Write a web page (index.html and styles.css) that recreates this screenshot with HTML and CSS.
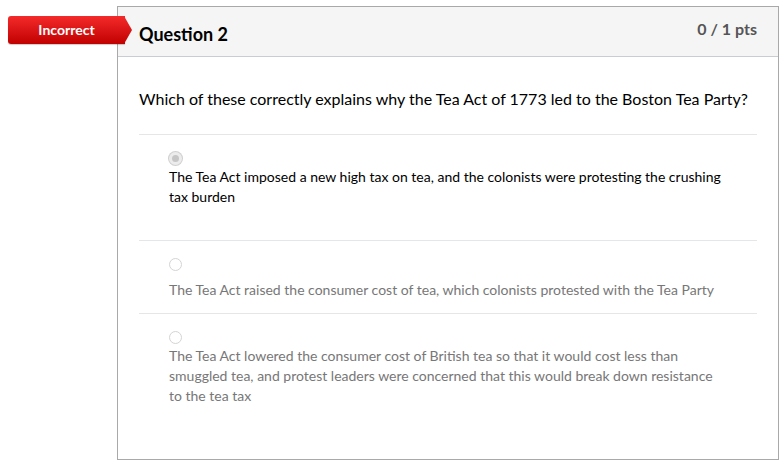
FILE: index.html
```html
<!DOCTYPE html>
<html lang="en">
<head>
    <meta charset="UTF-8">
    <title>Question 2</title>
    <link rel="stylesheet" href="styles.css">
</head>
<body>
    <div class="quiz">
        <div class="question">
            <div class="badge">Incorrect</div>
            <div class="header">
                <h2>Question 2</h2>
                <span class="points">0 / 1 pts</span>
            </div>
            <div class="content">
                <p class="question-text">Which of these correctly explains why the Tea Act of 1773 led to the Boston Tea Party?</p>
                <div class="answers">
                    <div class="answer selected first">
                        <span class="radio"></span>
                        <div class="answer-text">The Tea Act imposed a new high tax on tea, and the colonists were protesting the crushing tax burden</div>
                    </div>
                    <div class="answer second">
                        <span class="radio"></span>
                        <div class="answer-text">The Tea Act raised the consumer cost of tea, which colonists protested with the Tea Party</div>
                    </div>
                    <div class="answer third">
                        <span class="radio"></span>
                        <div class="answer-text">The Tea Act lowered the consumer cost of British tea so that it would cost less than smuggled tea, and protest leaders were concerned that this would break down resistance to the tea tax</div>
                    </div>
                </div>
            </div>
        </div>
    </div>
</body>
</html>
```

FILE: styles.css
```css
body {
    font-family: Lato, "Open Sans", "Liberation Sans", sans-serif;
    background-color: #ffffff;
    color: #2d3b45;
    margin: 0;
}

.quiz {
    padding: 6px 2px 0 117px;
}

.question {
    position: relative;
    width: 660px;
    height: 452px;
    border: 1px solid #a9a9a9;
}

.badge {
    position: absolute;
    left: -110px;
    top: 9px;
    width: 117px;
    height: 28px;
    line-height: 27px;
    color: white;
    font-size: 14px;
    font-weight: bold;
    text-align: center;
    background: linear-gradient(#f42a2a, #c10000);
    border-radius: 3px 0 0 3px;
    box-shadow: 0 1px 1px rgba(0, 0, 0, 0.2);
}

.badge:after {
    content: "";
    position: absolute;
    right: -7px;
    top: 0;
    width: 8px;
    height: 28px;
    background: linear-gradient(#f42a2a, #c10000);
    clip-path: polygon(0 0, 100% 50%, 0 100%);
}

.header {
    display: flex;
    justify-content: space-between;
    height: 49px;
    padding: 0 21px;
    background-color: #f5f5f5;
    border-bottom: 1px solid #c7cdd1;
}

.header h2 {
    margin: 0;
    padding-top: 16px;
    font-size: 18px;
    font-weight: bold;
    color: #000;
}

.points {
    padding-top: 12px;
    font-size: 16px;
    font-weight: bold;
    color: #555;
}

.content {
    padding: 30px 21px 0 21px;
}

.question-text {
    margin: 0 0 23px 0;
    font-size: 16px;
    line-height: 24px;
    color: #000;
}

.answer {
    border-top: 1px solid #e4e6e8;
    padding: 17px 30px 0 30px;
    font-size: 14px;
    line-height: 20px;
    color: #777;
}

.answer.selected {
    color: #000;
}

.first {
    padding-bottom: 33px;
}

.first .answer-text {
    margin-top: 2px;
}

.second {
    padding-bottom: 13px;
}

.second .answer-text {
    margin-top: 9px;
}

.third .answer-text {
    margin-top: 2px;
}

.radio {
    display: block;
    width: 11px;
    height: 11px;
    border: 1px solid #d4d4d4;
    border-radius: 50%;
    background: white;
    box-sizing: content-box;
}

.selected .radio {
    width: 7px;
    height: 7px;
    border: 3px solid #ececec;
    background: #c6c6c6;
    box-shadow: 0 0 0 1px #d0d0d0;
}
```
